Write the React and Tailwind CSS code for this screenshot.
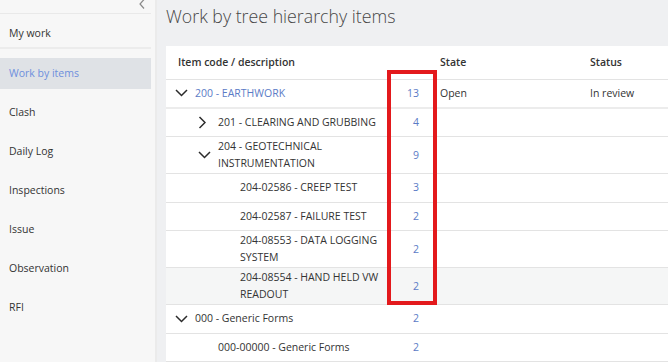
import React from 'react';

const navItems = ['Work by items', 'Clash', 'Daily Log', 'Inspections', 'Issue', 'Observation', 'RFI'];

const rows = [
  { label: '200 - EARTHWORK', count: 13, pad: 'pl-[9px]', toggle: 'down', link: true, state: 'Open', status: 'In review', first: true },
  { label: '201 - CLEARING AND GRUBBING', count: 4, pad: 'pl-[32px]', toggle: 'right' },
  { label: '204 - GEOTECHNICAL INSTRUMENTATION', count: 9, pad: 'pl-[32px]', toggle: 'down' },
  { label: '204-02586 - CREEP TEST', count: 3, pad: 'pl-[74px]' },
  { label: '204-02587 - FAILURE TEST', count: 2, pad: 'pl-[74px]' },
  { label: '204-08553 - DATA LOGGING SYSTEM', count: 2, pad: 'pl-[74px]' },
  { label: '204-08554 - HAND HELD VW READOUT', count: 2, pad: 'pl-[74px]', hover: true },
  { label: '000 - Generic Forms', count: 2, pad: 'pl-[9px]', toggle: 'down' },
  { label: '000-00000 - Generic Forms', count: 2, pad: 'pl-[52px]' },
];

const Chevron = ({ dir }) => (
  <span className="w-[20px] shrink-0 flex items-center">
    {dir === 'down' ? (
      <svg width="13" height="8" viewBox="0 0 13 8" fill="none">
        <path d="M1 1l5.5 5.5L12 1" stroke="#2b2b2b" strokeWidth="1.5" />
      </svg>
    ) : (
      <svg width="8" height="13" viewBox="0 0 8 13" fill="none">
        <path d="M1.5 1l5.5 5.5-5.5 5.5" stroke="#2b2b2b" strokeWidth="1.5" />
      </svg>
    )}
  </span>
);

export default function App() {
  return (
    <div className="flex h-[362px] w-[668px] overflow-hidden text-[10.5px] text-[#333]" style={{ fontFamily: '"Open Sans", "Liberation Sans", sans-serif' }}>
      <aside className="w-[157px] shrink-0 bg-[#f7f7f7] border-r-2 border-[#ebebeb] pr-[4px]">
        <div className="h-[14px] border-b border-[#e9e9e9] flex justify-end items-start pr-[6px]">
          <svg width="6" height="10" viewBox="0 0 6 10" fill="none" className="-mt-[1px]">
            <path d="M5 0.5L1 5l4 4.5" stroke="#8a8a8a" strokeWidth="1.2" />
          </svg>
        </div>
        <div className="h-[35px] flex items-center pt-[7px] px-[9px] border-b-2 border-[#ececec]">My work</div>
        <ul className="pt-[5px]">
          {navItems.map((item, i) => (
            <li key={item} className="py-[4px]">
              <div className={`h-[31px] flex items-center px-[9px] ${i === 0 ? 'bg-[#dfe2e6] text-[#6e8fdd]' : ''}`}>{item}</div>
            </li>
          ))}
        </ul>
      </aside>

      <main className="flex-1 bg-[#eff0f2] pl-[9px] flex flex-col">
        <h1 className="h-[47px] pt-[3px] text-[17.75px] font-light text-[#474747]">Work by tree hierarchy items</h1>
        <div className="relative flex-1 bg-white">
          <div className="grid grid-cols-[220px_51px_150px_1fr] h-[34px] pt-[2px] items-center border-b border-[#e3e3e3] font-semibold">
            <div className="pl-[12px]">Item code / description</div>
            <div />
            <div className="pl-[3px]">State</div>
            <div className="pl-[3px]">Status</div>
          </div>
          {rows.map((r) => (
            <div
              key={r.label}
              className={`grid grid-cols-[220px_51px_150px_1fr] items-center leading-[17px] ${
                r.first ? 'h-[29px] py-px border-b-2 border-[#ececec]' : 'min-h-[28.5px] py-px border-b border-[#e3e3e3]'
              } ${r.hover ? 'bg-[#f5f6f6]' : ''}`}
            >
              <div className={`flex items-center pr-[4px] ${r.pad}`}>
                {r.toggle && <Chevron dir={r.toggle} />}
                <span className={r.link ? 'text-[#5b7bc6]' : ''}>{r.label}</span>
              </div>
              <div className="text-right pr-[18px] text-[#5b7bc6]">{r.count}</div>
              <div className="pl-[3px]">{r.state}</div>
              <div className="pl-[3px]">{r.status}</div>
            </div>
          ))}
          <div className="absolute left-[221px] top-[24px] w-[50px] h-[235px] border-[4px] border-[#e3191c]" />
        </div>
      </main>
    </div>
  );
}
